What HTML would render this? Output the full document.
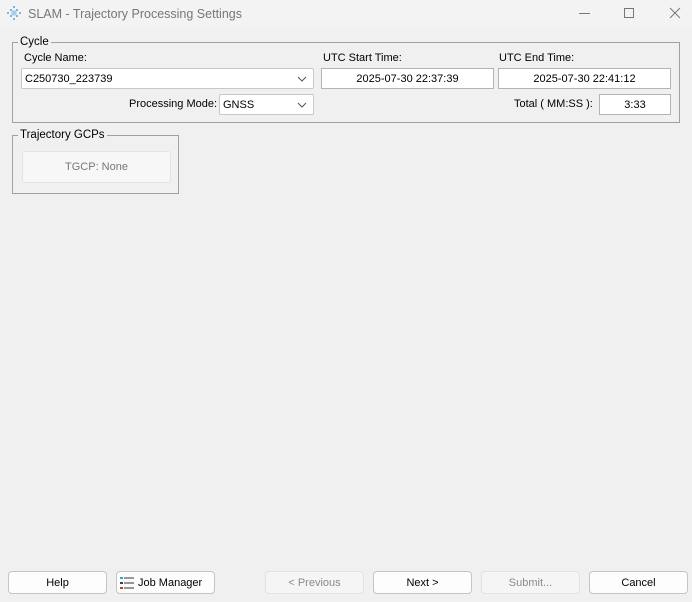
<!DOCTYPE html><html><head><style>
*{box-sizing:border-box;margin:0;padding:0}
body{width:692px;height:602px;background:#f0f0f0;font-family:"Liberation Sans",sans-serif;font-size:11px;color:#000;position:relative;overflow:hidden}
.a{position:absolute}
.title{top:0;left:0;width:692px;height:29px;background:#f3f3f3}
.box{border:1px solid #a0a0a0;}
.legend{background:#f0f0f0;padding:0 2px;font-size:11.5px}
.in{background:#fff;border:1px solid #b4b4b4;height:21px;line-height:20px;text-align:center}
.cb{background:#fff;border:1px solid #c8c8c8;border-radius:2px;height:21px;line-height:20px;padding-left:3px}
.btn{height:23px;border:1px solid #c4c4c4;border-radius:4px;background:#fdfdfd;text-align:center;line-height:23px;font-size:11px;top:571px;width:99px}
.dis{background:#f5f5f5;border-color:#e2e2e2;color:#8a8a8a}
.chev{position:absolute;right:6px;top:5px}
</style></head><body>
<div class="a title"></div>
<svg class="a" style="left:6px;top:6px" width="16" height="16" viewBox="0 0 16 16"><g fill="#7fb5dc"><rect x="7" y="0" width="2" height="2"/><rect x="4" y="3" width="2" height="2"/><rect x="10" y="3" width="2" height="2"/><rect x="1" y="6" width="2" height="2"/><rect x="7" y="6" width="2" height="2"/><rect x="13" y="6" width="2" height="2"/><rect x="4" y="9" width="2" height="2"/><rect x="10" y="9" width="2" height="2"/><rect x="7" y="12" width="2" height="2"/><rect x="5.5" y="4.5" width="5" height="5" fill="#a8cde8"/></g></svg>
<div class="a" style="left:28px;top:7px;font-size:12.5px;color:#777">SLAM - Trajectory Processing Settings</div>
<div class="a" style="left:579px;top:13px;width:11px;height:1px;background:#777"></div>
<div class="a" style="left:624px;top:8px;width:10px;height:10px;border:1px solid #777"></div>
<svg class="a" style="left:669px;top:7px" width="12" height="12"><path d="M1 1L11 11M11 1L1 11" stroke="#777" stroke-width="1"/></svg>

<div class="a box" style="left:12px;top:42px;width:668px;height:81px"></div>
<div class="a legend" style="left:18px;top:36px">Cycle</div>
<div class="a" style="left:24px;top:52px">Cycle Name:</div>
<div class="a cb" style="left:21px;top:68px;width:293px">C250730_223739<svg class="chev" width="10" height="10"><path d="M1 3L5 7L9 3" stroke="#555" fill="none"/></svg></div>
<div class="a" style="left:129px;top:98px">Processing Mode:</div>
<div class="a cb" style="left:219px;top:94px;width:95px">GNSS<svg class="chev" width="10" height="10"><path d="M1 3L5 7L9 3" stroke="#555" fill="none"/></svg></div>
<div class="a" style="left:323px;top:52px">UTC Start Time:</div>
<div class="a in" style="left:321px;top:68px;width:173px">2025-07-30 22:37:39</div>
<div class="a" style="left:499px;top:52px">UTC End Time:</div>
<div class="a in" style="left:498px;top:68px;width:173px">2025-07-30 22:41:12</div>
<div class="a" style="left:514px;top:98px">Total ( MM:SS ):</div>
<div class="a in" style="left:599px;top:94px;width:72px">3:33</div>

<div class="a box" style="left:12px;top:135px;width:167px;height:59px"></div>
<div class="a legend" style="left:18px;top:129px">Trajectory GCPs</div>
<div class="a" style="left:22px;top:151px;width:149px;height:32px;background:#f7f7f7;border:1px solid #e4e4e4;border-radius:3px;text-align:center;line-height:31px;color:#777">TGCP: None</div>

<div class="a btn" style="left:8px">Help</div>
<div class="a btn" style="left:116px;text-align:left;padding-left:21px">Job Manager</div>
<svg class="a" style="left:120px;top:576px" width="14" height="14"><rect x="0" y="1" width="3" height="2" fill="#3aa0d8"/><rect x="0" y="6" width="3" height="2" fill="#345"/><rect x="0" y="11" width="3" height="2" fill="#e03030"/><path d="M4 2H14M4 7H14M4 12H14" stroke="#333"/></svg>
<div class="a btn dis" style="left:265px">&lt; Previous</div>
<div class="a btn" style="left:373px">Next &gt;</div>
<div class="a btn dis" style="left:481px">Submit...</div>
<div class="a btn" style="left:589px">Cancel</div>
</body></html>
